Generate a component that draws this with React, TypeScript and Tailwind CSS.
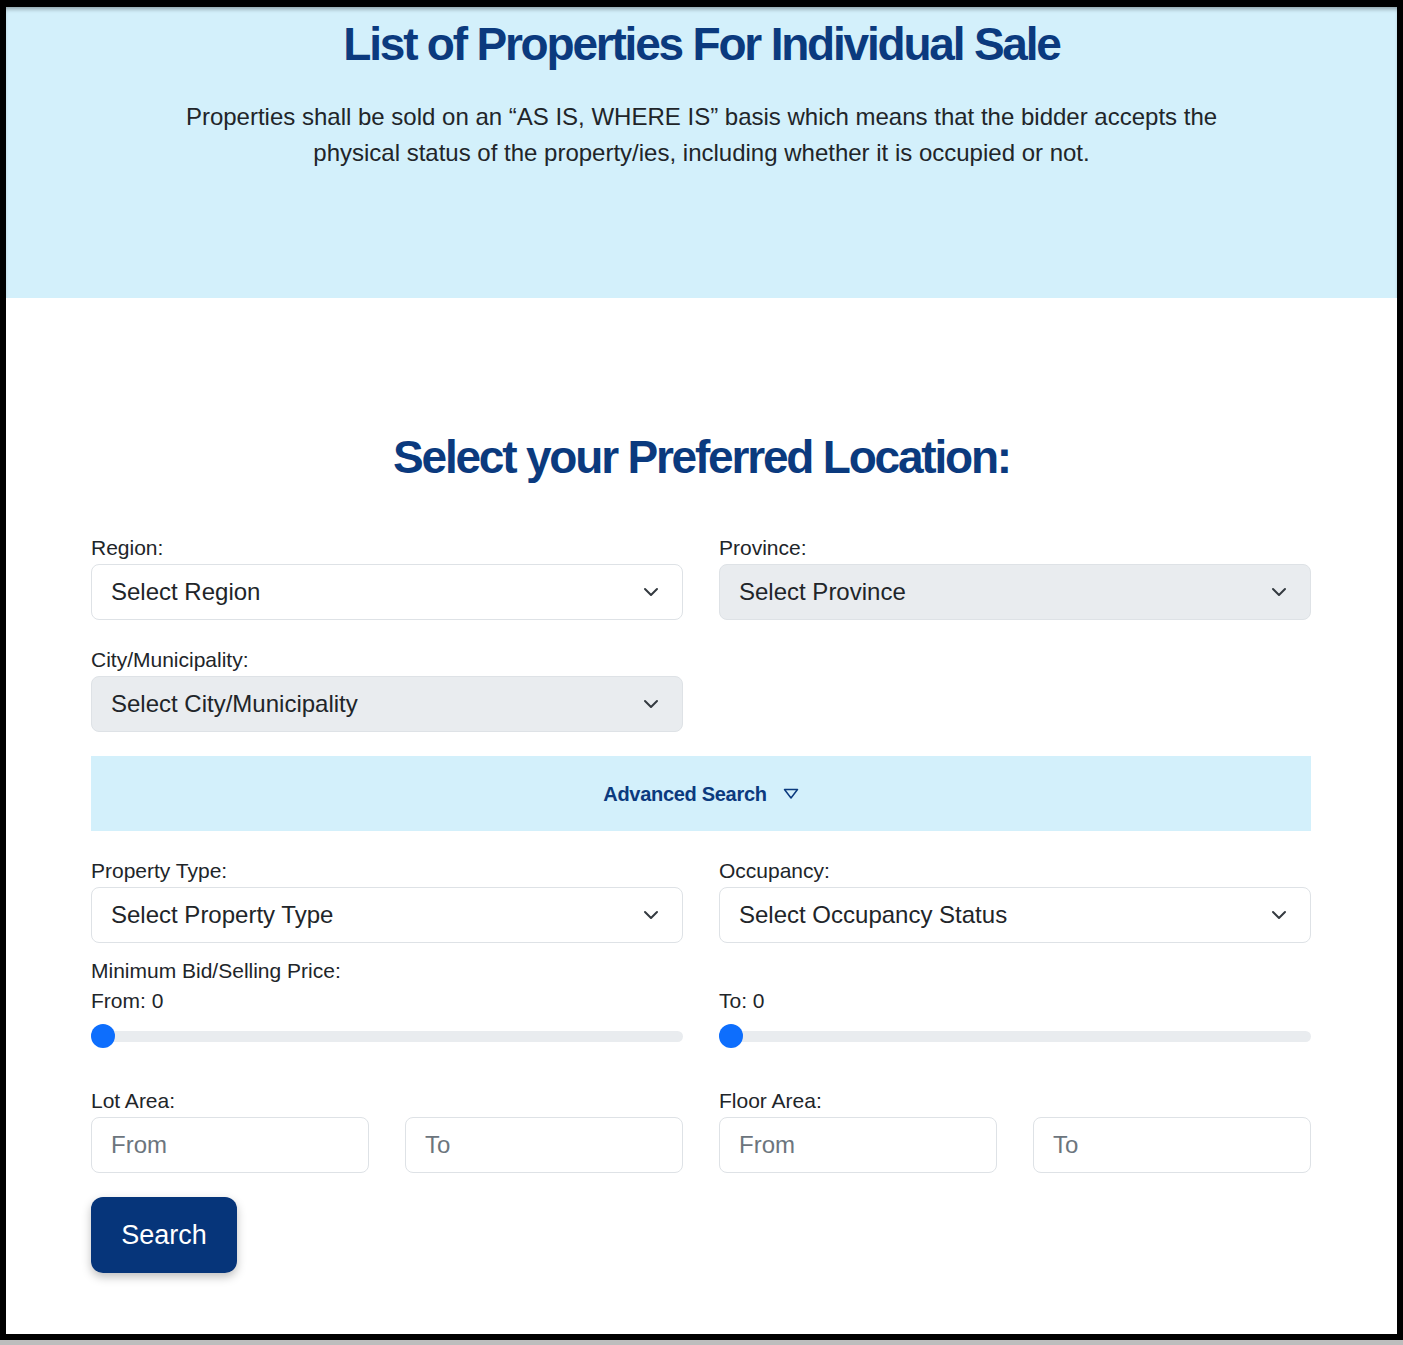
import React from 'react';

const font = { fontFamily: '"Liberation Sans", Arial, sans-serif' };

const Chevron = () => (
  <svg width="16" height="16" viewBox="0 0 16 16" fill="none" stroke="#343a40" strokeWidth="2" strokeLinecap="round" strokeLinejoin="round">
    <path d="M2 5l6 6 6-6" />
  </svg>
);

interface SelectProps {
  label?: string;
  placeholder: string;
  disabled?: boolean;
}

const SelectField: React.FC<SelectProps> = ({ label, placeholder, disabled }) => (
  <div className="flex flex-col">
    {label && <label className="text-[21px] leading-6 text-[#212529] mb-1">{label}</label>}
    <div
      className={`h-[56px] flex items-center justify-between pl-[19px] pr-[23px] rounded-[8px] border border-[#dee2e6] text-[24px] text-[#212529] ${
        disabled ? 'bg-[#e9ecef]' : 'bg-white'
      }`}
    >
      <span>{placeholder}</span>
      <Chevron />
    </div>
  </div>
);

const TextBox: React.FC<{ placeholder: string }> = ({ placeholder }) => (
  <div className="h-[56px] flex items-center pl-[19px] rounded-[8px] border border-[#dee2e6] bg-white text-[24px] text-[#6c757d]">
    {placeholder}
  </div>
);

const Slider = () => (
  <div className="relative h-[24px] flex items-center">
    <div className="w-full h-[11px] rounded-full bg-[#e9ecef]" />
    <div className="absolute left-0 top-0 w-[24px] h-[24px] rounded-full bg-[#0d6efd]" />
  </div>
);

export default function App() {
  return (
    <div className="w-[1403px] h-[1345px] bg-[#bdbdbd]" style={font}>
      <div className="h-[1340px] bg-black pt-[7px] px-[6px] pb-[6px]">
        <div className="h-full bg-white flex flex-col overflow-hidden">
          {/* Header */}
          <div className="h-[291px] bg-[#d3f0fb] flex flex-col items-center pt-[10px] shadow-[inset_0_4px_4px_-2px_rgba(0,0,0,0.35)]">
            <h1 className="text-[46px] leading-[55px] font-bold text-[#0b3a7e] tracking-[-2.2px]">
              List of Properties For Individual Sale
            </h1>
            <p className="mt-[27px] w-[1060px] text-center text-[24px] leading-[36px] text-[#212529]">
              Properties shall be sold on an “AS IS, WHERE IS” basis which means that the bidder accepts the physical status of the property/ies, including whether it is occupied or not.
            </p>
          </div>

          {/* Location */}
          <h2 className="mt-[132px] text-center text-[46px] leading-[55px] font-bold text-[#0b3a7e] tracking-[-2.2px]">
            Select your Preferred Location:
          </h2>

          <div className="ml-[85px] w-[1220px] mt-[51px] flex flex-col">
            <div className="grid grid-cols-2 gap-x-[36px]">
              <SelectField label="Region:" placeholder="Select Region" />
              <SelectField label="Province:" placeholder="Select Province" disabled />
            </div>
            <div className="grid grid-cols-2 gap-x-[36px] mt-[28px]">
              <SelectField label="City/Municipality:" placeholder="Select City/Municipality" disabled />
            </div>

            <div className="mt-[24px] h-[75px] bg-[#d3f0fb] flex items-center justify-center gap-[16px] text-[20px] font-bold text-[#0b3a7e] tracking-[-0.3px]">
              <span>Advanced Search</span>
              <svg width="16" height="12" viewBox="0 0 16 12" fill="none" stroke="#0b3a7e" strokeWidth="1.5" strokeLinejoin="round">
                <path d="M1.5 1.5h13L8 10z" />
              </svg>
            </div>

            <div className="grid grid-cols-2 gap-x-[36px] mt-[28px]">
              <SelectField label="Property Type:" placeholder="Select Property Type" />
              <SelectField label="Occupancy:" placeholder="Select Occupancy Status" />
            </div>

            <div className="mt-[16px] text-[21px] leading-6 text-[#212529]">Minimum Bid/Selling Price:</div>
            <div className="grid grid-cols-2 gap-x-[36px] mt-[6px]">
              <div className="flex flex-col gap-[11px]">
                <span className="text-[21px] leading-6 text-[#212529]">From: 0</span>
                <Slider />
              </div>
              <div className="flex flex-col gap-[11px]">
                <span className="text-[21px] leading-6 text-[#212529]">To: 0</span>
                <Slider />
              </div>
            </div>

            <div className="grid grid-cols-2 gap-x-[36px] mt-[41px]">
              <div className="flex flex-col">
                <label className="text-[21px] leading-6 text-[#212529] mb-1">Lot Area:</label>
                <div className="grid grid-cols-2 gap-x-[36px]">
                  <TextBox placeholder="From" />
                  <TextBox placeholder="To" />
                </div>
              </div>
              <div className="flex flex-col">
                <label className="text-[21px] leading-6 text-[#212529] mb-1">Floor Area:</label>
                <div className="grid grid-cols-2 gap-x-[36px]">
                  <TextBox placeholder="From" />
                  <TextBox placeholder="To" />
                </div>
              </div>
            </div>

            <div className="mt-[24px]">
              <button className="w-[146px] h-[76px] rounded-[12px] bg-[#06357a] text-white text-[27px] shadow-[0_4px_10px_rgba(0,0,0,0.25)]">
                Search
              </button>
            </div>
          </div>
        </div>
      </div>
    </div>
  );
}
